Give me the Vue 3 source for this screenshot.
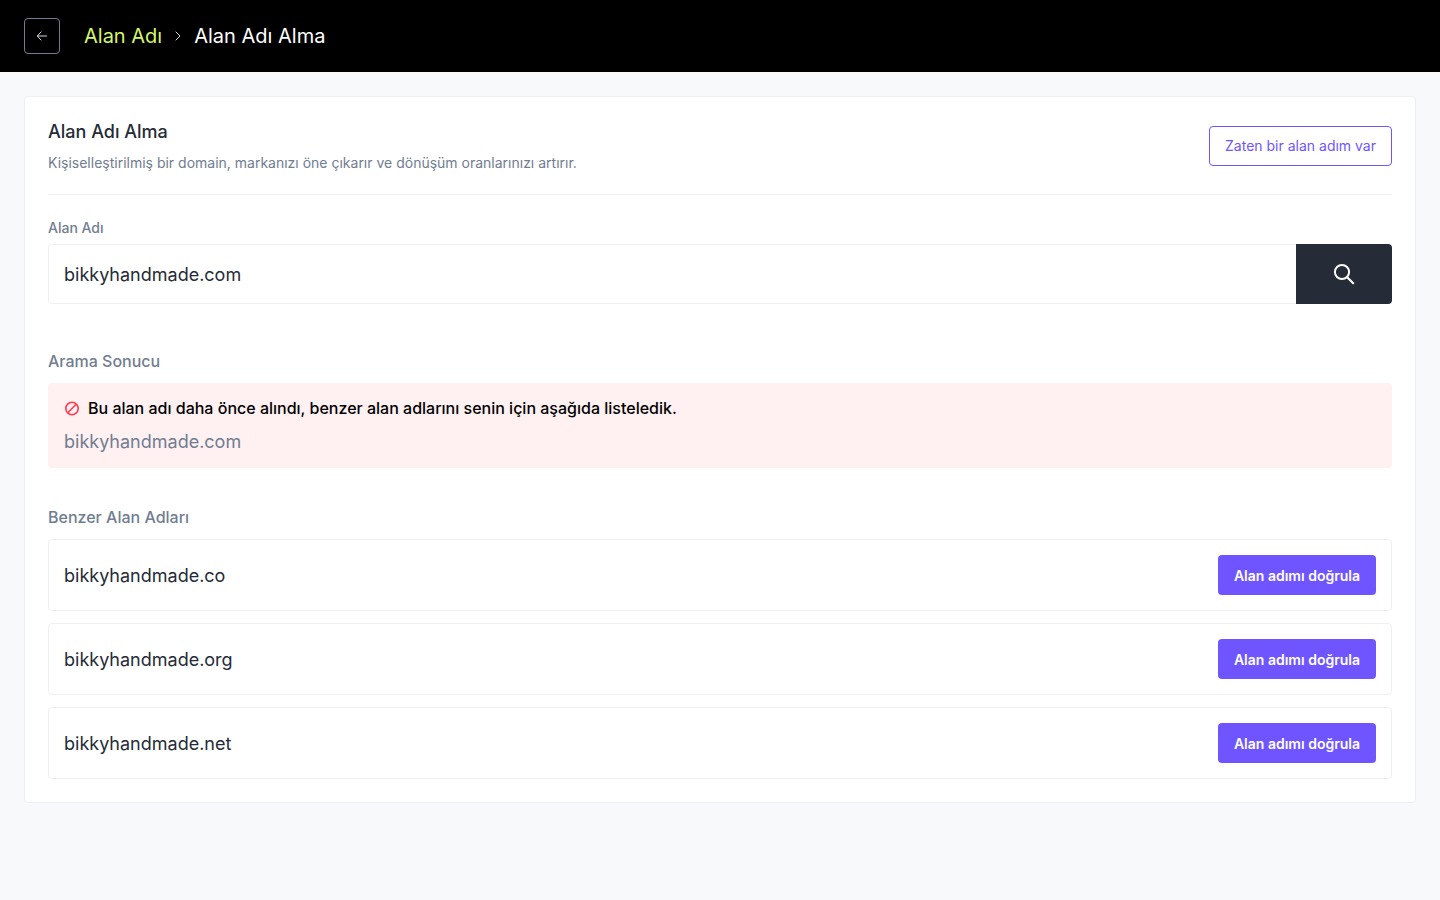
<template>
  <div class="page">
    <header class="topbar">
      <button class="back" type="button" aria-label="Geri">
        <svg width="12" height="12" viewBox="0 0 12 12" fill="none">
          <path d="M10.5 6H1.6M5 2L1.2 6 5 10" stroke="currentColor" stroke-linecap="round" stroke-linejoin="round"/>
        </svg>
      </button>
      <nav class="crumbs">
        <a href="#">Alan Adı</a>
        <svg width="8" height="12" viewBox="0 0 8 12" fill="none">
          <path d="M2 2l4 4-4 4" stroke="currentColor" stroke-linecap="round" stroke-linejoin="round"/>
        </svg>
        <span>Alan Adı Alma</span>
      </nav>
    </header>

    <main class="card">
      <div class="card_head">
        <div>
          <h1>Alan Adı Alma</h1>
          <p>Kişiselleştirilmiş bir domain, markanızı öne çıkarır ve dönüşüm oranlarınızı artırır.</p>
        </div>
        <button class="btn btn_outline" type="button">Zaten bir alan adım var</button>
      </div>

      <form class="search" @submit.prevent="handleSearch">
        <label for="domain">Alan Adı</label>
        <div class="search_box">
          <input id="domain" v-model="domain" type="text" autocomplete="off" spellcheck="false">
          <button type="submit" aria-label="Ara">
            <svg width="24" height="24" viewBox="0 0 24 24" fill="none">
              <circle cx="10" cy="10" r="7.1" stroke="currentColor" stroke-width="2"/>
              <path d="M15.2 15.2l6 6" stroke="currentColor" stroke-width="2.1" stroke-linecap="round"/>
            </svg>
          </button>
        </div>
      </form>

      <section class="result">
        <h2>Arama Sonucu</h2>
        <div class="taken">
          <p class="taken_text">
            <svg width="16" height="16" viewBox="0 0 16 16" fill="none">
              <circle cx="8" cy="7.5" r="6.2" stroke="currentColor" stroke-width="1.6"/>
              <path d="M3.8 11.7l8.4-8.4" stroke="currentColor" stroke-width="1.6"/>
            </svg>
            Bu alan adı daha önce alındı, benzer alan adlarını senin için aşağıda listeledik.
          </p>
          <p class="taken_domain">{{ searched }}</p>
        </div>
      </section>

      <section class="similar">
        <h2>Benzer Alan Adları</h2>
        <ul>
          <li v-for="item in similar" :key="item">
            <span>{{ item }}</span>
            <button class="btn btn_fill" type="button">Alan adımı doğrula</button>
          </li>
        </ul>
      </section>
    </main>
  </div>
</template>

<script setup>
import {ref,computed} from 'vue'

const domain = ref('bikkyhandmade.com')
const searched = ref(domain.value)
const endings = ['co','org','net']
const similar = computed(() => {
  const name = searched.value.split('.')[0]
  return endings.map(e => `${name}.${e}`)
})
const handleSearch = () => {
  if(!domain.value){
    return
  }
  searched.value = domain.value
}
</script>

<style>
body {
  margin: 0;
  background: #f8f9fb;
}
</style>

<style scoped>
* {
  box-sizing: border-box;
}
h1, h2, p, ul {
  margin: 0;
  padding: 0;
}
button, input {
  font-family: inherit;
}
button {
  cursor: pointer;
}
svg {
  display: block;
  flex: none;
}
.page {
  font-family: Inter, "Liberation Sans", sans-serif;
  color: #252b37;
}

.topbar {
  display: flex;
  align-items: center;
  gap: 24px;
  height: 72px;
  padding: 0 24px;
  background: #000;
  color: #fff;
}
.back {
  display: flex;
  align-items: center;
  justify-content: center;
  width: 36px;
  height: 36px;
  padding: 0;
  border: 1px solid #717d91;
  border-radius: 4px;
  background: transparent;
  color: #d5d9e0;
}
.crumbs {
  display: flex;
  align-items: center;
  gap: 12px;
  font-size: 20px;
  line-height: 24px;
}
.crumbs a {
  color: #d8f769;
  text-decoration: none;
}
.crumbs svg {
  color: #d5d9e0;
}

.card {
  margin: 24px;
  padding: 23px;
  border: 1px solid #edf0f5;
  border-radius: 4px;
  background: #fff;
}
.card_head {
  display: flex;
  align-items: center;
  justify-content: space-between;
  gap: 24px;
  padding-bottom: 23px;
  border-bottom: 1px solid #edf0f5;
}
h1 {
  font-size: 18px;
  line-height: 24px;
  font-weight: 500;
}
.card_head p {
  margin-top: 10px;
  font-size: 14px;
  line-height: 17px;
  color: #717d91;
}
.btn {
  flex: none;
  height: 40px;
  border-radius: 4px;
  font-size: 14px;
  line-height: 17px;
}
.btn_outline {
  padding: 0 15px;
  border: 1px solid #6f55ff;
  background: #fff;
  color: #6f55ff;
}
.btn_fill {
  padding: 0 16px;
  border: none;
  background: #6f55ff;
  color: #fff;
  font-weight: 600;
}

.search {
  margin-top: 24px;
}
.search label {
  display: block;
  font-size: 14px;
  line-height: 17px;
  font-weight: 500;
  color: #717d91;
}
.search_box {
  display: flex;
  height: 60px;
  margin-top: 8px;
}
.search_box input {
  flex: 1;
  min-width: 0;
  padding: 0 15px;
  border: 1px solid #edf0f5;
  border-right: none;
  border-radius: 4px 0 0 4px;
  outline: none;
  background: #fff;
  font-size: 18px;
  color: #252b37;
}
.search_box button {
  display: flex;
  align-items: center;
  justify-content: center;
  width: 96px;
  padding: 0;
  border: none;
  border-radius: 0 4px 4px 0;
  background: #252b37;
  color: #fff;
}

h2 {
  font-size: 16px;
  line-height: 19px;
  font-weight: 500;
  color: #717d91;
}
.result {
  margin-top: 48px;
}
.taken {
  margin-top: 12px;
  padding: 16px 16px 15px;
  border-radius: 4px;
  background: #fff0f1;
}
.taken_text {
  display: flex;
  align-items: center;
  gap: 8px;
  font-size: 16px;
  line-height: 19px;
  font-weight: 500;
  color: #000;
}
.taken_text svg {
  color: #ff3b4e;
}
.taken_domain {
  margin-top: 12px;
  font-size: 18px;
  line-height: 23px;
  color: #717d91;
}
.similar {
  margin-top: 40px;
}
.similar ul {
  display: flex;
  flex-direction: column;
  gap: 12px;
  margin-top: 12px;
  list-style: none;
}
.similar li {
  display: flex;
  align-items: center;
  justify-content: space-between;
  padding: 15px;
  border: 1px solid #edf0f5;
  border-radius: 4px;
  font-size: 18px;
  line-height: 23px;
}
</style>
